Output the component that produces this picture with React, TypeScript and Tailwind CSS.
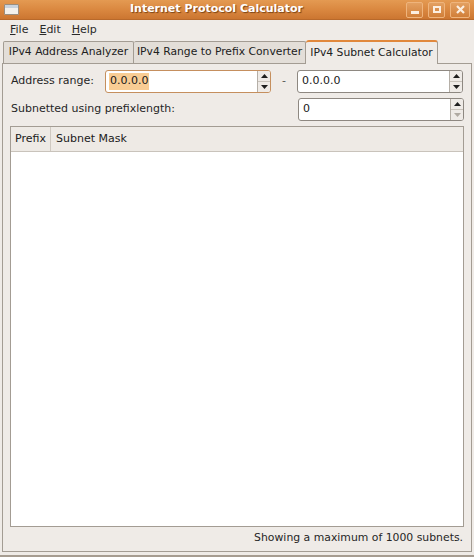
import React from "react";

const font = { fontFamily: '"DejaVu Sans", "Liberation Sans", sans-serif' };

function SpinArrows({ downDisabled = false }: { downDisabled?: boolean }) {
  return (
    <div className="flex flex-col w-[13px] h-full border-l border-[#b5afa7] bg-[#efebe7]">
      <div className="flex-1 flex items-center justify-center border-b border-[#c9c3bb]">
        <svg width="7" height="4" viewBox="0 0 7 4">
          <polygon points="0,4 7,4 3.5,0" fill="#1e1e1e" />
        </svg>
      </div>
      <div className="flex-1 flex items-center justify-center">
        <svg width="7" height="4" viewBox="0 0 7 4">
          <polygon points="0,0 7,0 3.5,4" fill={downDisabled ? "#b0aaa2" : "#1e1e1e"} />
        </svg>
      </div>
    </div>
  );
}

function SpinEntry({
  value,
  focused = false,
  downDisabled = false,
}: {
  value: string;
  focused?: boolean;
  downDisabled?: boolean;
}) {
  return (
    <div
      className={`flex h-[23px] w-[166px] rounded-[3px] bg-white overflow-hidden border ${
        focused ? "border-[#c58f5e]" : "border-[#8e8881]"
      }`}
    >
      <div className="flex-1 flex items-center pl-[3px] text-[11px] text-[#1a1a1a]">
        <span className={focused ? "bg-[#f9cd94] px-[1px]" : "px-[1px]"}>{value}</span>
      </div>
      <SpinArrows downDisabled={downDisabled} />
    </div>
  );
}

function TitleButton({ children, wide = false }: { children: React.ReactNode; wide?: boolean }) {
  return (
    <div
      className={`${wide ? "w-[20px]" : "w-[17px]"} h-[16px] rounded-[2px] border border-[#efb47c] bg-gradient-to-b from-[#e3a061] to-[#d17f38] flex items-center justify-center`}
    >
      {children}
    </div>
  );
}

export default function App() {
  return (
    <div
      className="w-[474px] h-[557px] bg-[#efebe7] flex flex-col overflow-hidden text-[#202020]"
      style={font}
    >
      {/* window title bar */}
      <div className="h-[20px] shrink-0 flex items-center bg-gradient-to-b from-[#e49a52] via-[#da8840] to-[#cc7631] border-b border-[#b8692b] pl-[4px] pr-[4px]">
        <div className="w-[15px] h-[11px] bg-[#f4f1ec] border border-[#9a8e80] rounded-[1px] flex flex-col">
          <div className="h-[3px] bg-[#c9d3de]" />
        </div>
        <div
          className="flex-1 text-center text-[11px] font-bold text-white ml-[8px]"
          style={{ textShadow: "1px 1px 1px #7a4214" }}
        >
          Internet Protocol Calculator
        </div>
        <div className="flex gap-[5px]">
          <TitleButton>
            <div className="w-[8px] h-[3px] bg-[#fbeee0] mt-[6px]" />
          </TitleButton>
          <TitleButton>
            <div className="w-[8px] h-[7px] border-2 border-[#fbeee0]" />
          </TitleButton>
          <TitleButton wide>
            <svg width="9" height="9" viewBox="0 0 9 9">
              <path d="M1 1 L8 8 M8 1 L1 8" stroke="#fbeee0" strokeWidth="2.2" />
            </svg>
          </TitleButton>
        </div>
      </div>

      {/* menu bar */}
      <div className="h-[20px] shrink-0 flex items-center gap-[11px] pl-[10px] text-[11px] text-[#2a2a2a]">
        <span>
          <span className="underline underline-offset-1">F</span>ile
        </span>
        <span>
          <span className="underline underline-offset-1">E</span>dit
        </span>
        <span>
          <span className="underline underline-offset-1">H</span>elp
        </span>
      </div>

      {/* notebook */}
      <div className="flex-1 flex flex-col mx-[2px]">
        <div className="flex items-end h-[23px] pl-[1px] text-[10.75px]">
          <div className="h-[22px] w-[131px] flex items-center justify-center bg-[#e3ded8] border border-b-0 border-[#a39c93] rounded-t-[2px]">
            IPv4 Address Analyzer
          </div>
          <div className="h-[22px] w-[172px] flex items-center justify-center bg-[#e3ded8] border border-b-0 border-l-0 border-[#a39c93] rounded-t-[2px]">
            IPv4 Range to Prefix Converter
          </div>
          <div className="h-[24px] w-[132px] flex items-center justify-center bg-[#efebe7] border border-b-0 border-l-0 border-[#a39c93] border-t-2 border-t-[#e1883c] rounded-t-[3px] -mb-[1px] relative z-10">
            IPv4 Subnet Calculator
          </div>
        </div>

        <div className="flex-1 flex flex-col border border-[#a39c93] px-[7px] pt-[6px] pb-[5px] text-[11px]">
          <div className="flex items-center h-[23px]">
            <div className="w-[95px] pl-[1px] text-[#262626]">Address range:</div>
            <SpinEntry value="0.0.0.0" focused />
            <div className="w-[26px] text-center text-[#555]">-</div>
            <SpinEntry value="0.0.0.0" />
          </div>
          <div className="flex items-center h-[23px] mt-[5px]">
            <div className="flex-1 pl-[1px] text-[#262626]">Subnetted using prefixlength:</div>
            <SpinEntry value="0" downDisabled />
          </div>

          <div className="flex-1 flex flex-col mt-[5px] border border-[#a39c93] bg-white">
            <div className="h-[25px] flex items-center bg-[#eeeae5] border-b border-[#c9c3bb]">
              <div className="w-[40px] pl-[4px] h-full flex items-center border-r border-[#cfc9c1]">
                Prefix
              </div>
              <div className="pl-[5px]">Subnet Mask</div>
            </div>
            <div className="flex-1" />
          </div>

          <div className="h-[19px] flex items-end justify-end pr-[1px] text-[10.85px] text-[#262626]">
            Showing a maximum of 1000 subnets.
          </div>
        </div>
        <div className="h-[3px]" />
      </div>

      {/* lower window frame */}
      <div className="h-[2px] shrink-0 bg-[#a69c90]" />
    </div>
  );
}
